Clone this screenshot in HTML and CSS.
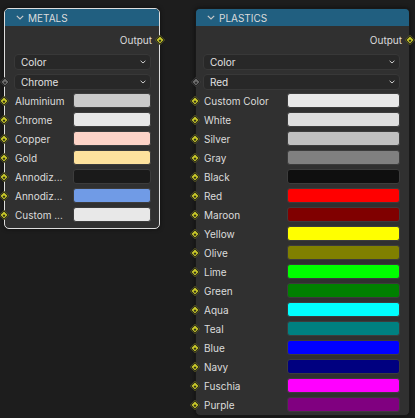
FILE: index.html
```html
<!DOCTYPE html>
<html>
<head>
<meta charset="utf-8">
<link rel="stylesheet" href="styles.css">
</head>
<body>
<div class="canvas">
  <div class="node metals">
    <div class="hdr"><svg class="chev" width="8" height="5" viewBox="0 0 8 5"><path d="M0.8 0.8 L4 4 L7.2 0.8"/></svg><span>METALS</span></div>
    <div class="body">
      <div class="out">Output<i class="sock sock-out"></i></div>
      <div class="dd">Color<svg class="ddchev" width="6" height="4" viewBox="0 0 6 4"><path d="M0.6 0.8 L3 3 L5.4 0.8"/></svg></div>
      <div class="dd">Chrome<svg class="ddchev" width="6" height="4" viewBox="0 0 6 4"><path d="M0.6 0.8 L3 3 L5.4 0.8"/></svg><i class="sock sock-in grey"></i></div>
      <div class="row"><i class="sock sock-in"></i><span class="lbl">Aluminium</span><span class="sw" style="background:#cacaca"></span></div>
      <div class="row"><i class="sock sock-in"></i><span class="lbl">Chrome</span><span class="sw" style="background:#e7e7e7"></span></div>
      <div class="row"><i class="sock sock-in"></i><span class="lbl">Copper</span><span class="sw" style="background:#fdd3c7"></span></div>
      <div class="row"><i class="sock sock-in"></i><span class="lbl">Gold</span><span class="sw" style="background:#fee29d"></span></div>
      <div class="row"><i class="sock sock-in"></i><span class="lbl">Annodiz...</span><span class="sw" style="background:#1a1a1a"></span></div>
      <div class="row"><i class="sock sock-in"></i><span class="lbl">Annodiz...</span><span class="sw" style="background:#709be6"></span></div>
      <div class="row"><i class="sock sock-in"></i><span class="lbl">Custom ...</span><span class="sw" style="background:#e8e8e8"></span></div>
    </div>
  </div>

  <div class="node plastics">
    <div class="hdr"><svg class="chev" width="8" height="5" viewBox="0 0 8 5"><path d="M0.8 0.8 L4 4 L7.2 0.8"/></svg><span>PLASTICS</span></div>
    <div class="body">
      <div class="out">Output<i class="sock sock-out"></i></div>
      <div class="dd">Color<svg class="ddchev" width="6" height="4" viewBox="0 0 6 4"><path d="M0.6 0.8 L3 3 L5.4 0.8"/></svg></div>
      <div class="dd">Red<svg class="ddchev" width="6" height="4" viewBox="0 0 6 4"><path d="M0.6 0.8 L3 3 L5.4 0.8"/></svg><i class="sock sock-in grey"></i></div>
      <div class="row"><i class="sock sock-in"></i><span class="lbl">Custom Color</span><span class="sw" style="background:#e8e8e8"></span></div>
      <div class="row"><i class="sock sock-in"></i><span class="lbl">White</span><span class="sw" style="background:#dedede"></span></div>
      <div class="row"><i class="sock sock-in"></i><span class="lbl">Silver</span><span class="sw" style="background:#c0c0c0"></span></div>
      <div class="row"><i class="sock sock-in"></i><span class="lbl">Gray</span><span class="sw" style="background:#808080"></span></div>
      <div class="row"><i class="sock sock-in"></i><span class="lbl">Black</span><span class="sw" style="background:#0f0f0f"></span></div>
      <div class="row"><i class="sock sock-in"></i><span class="lbl">Red</span><span class="sw" style="background:#ff0000"></span></div>
      <div class="row"><i class="sock sock-in"></i><span class="lbl">Maroon</span><span class="sw" style="background:#800000"></span></div>
      <div class="row"><i class="sock sock-in"></i><span class="lbl">Yellow</span><span class="sw" style="background:#ffff00"></span></div>
      <div class="row"><i class="sock sock-in"></i><span class="lbl">Olive</span><span class="sw" style="background:#808000"></span></div>
      <div class="row"><i class="sock sock-in"></i><span class="lbl">Lime</span><span class="sw" style="background:#00ff00"></span></div>
      <div class="row"><i class="sock sock-in"></i><span class="lbl">Green</span><span class="sw" style="background:#008000"></span></div>
      <div class="row"><i class="sock sock-in"></i><span class="lbl">Aqua</span><span class="sw" style="background:#00ffff"></span></div>
      <div class="row"><i class="sock sock-in"></i><span class="lbl">Teal</span><span class="sw" style="background:#008080"></span></div>
      <div class="row"><i class="sock sock-in"></i><span class="lbl">Blue</span><span class="sw" style="background:#0000ff"></span></div>
      <div class="row"><i class="sock sock-in"></i><span class="lbl">Navy</span><span class="sw" style="background:#000080"></span></div>
      <div class="row"><i class="sock sock-in"></i><span class="lbl">Fuschia</span><span class="sw" style="background:#ff00ff"></span></div>
      <div class="row"><i class="sock sock-in"></i><span class="lbl">Purple</span><span class="sw" style="background:#800080"></span></div>
    </div>
  </div>
</div>
</body>
</html>
```

FILE: styles.css
```css
html, body {
  margin: 0;
  padding: 0;
  background: #1d1d1d;
}
.canvas {
  position: relative;
  width: 415px;
  height: 418px;
  overflow: hidden;
  background: #1d1d1d;
  font-family: Inter, "DejaVu Sans", sans-serif;
  font-size: 10px;
  color: #dcdcdc;
}
.node {
  position: absolute;
  top: 8px;
  box-sizing: border-box;
  background: #303030;
  border: 1px solid #181818;
  border-radius: 5px;
  box-shadow: 0 0 4px rgba(0,0,0,0.55);
}
.metals {
  left: 4px;
  width: 156px;
  height: 221px;
  border-color: #dedede;
}
.plastics {
  left: 195px;
  width: 215px;
  height: 408px;
}
.hdr {
  height: 17px;
  background: #215f80;
  border-radius: 4px 4px 0 0;
  display: flex;
  align-items: center;
  gap: 4px;
  padding-left: 11px;
  color: #dcdcdc;
}
.chev {
  display: block;
  fill: none;
  stroke: #c8c8c8;
  stroke-width: 1.2;
}
.body {
  display: flex;
  flex-direction: column;
  padding-top: 4px;
}
.out {
  position: relative;
  height: 19px;
  display: flex;
  align-items: center;
  justify-content: flex-end;
  padding-right: 7px;
}
.dd {
  position: relative;
  height: 16px;
  box-sizing: border-box;
  background: #282828;
  border: 1px solid #383838;
  border-radius: 4px;
  display: flex;
  align-items: center;
  padding-left: 6px;
  color: #e2e2e2;
}
.out + .dd { margin-top: 5px; }
.dd + .dd { margin-top: 4px; }
.ddchev {
  margin-left: auto;
  margin-right: 4px;
  fill: none;
  stroke: #cfcfcf;
  stroke-width: 1;
}
.metals .dd { margin-left: 9px; margin-right: 8px; }
.plastics .dd { margin-left: 7px; margin-right: 9px; }
.row {
  position: relative;
  height: 19px;
  display: flex;
  align-items: center;
}
.dd + .row { margin-top: 1px; }
.lbl {
  flex: 1;
  white-space: nowrap;
}
.metals .lbl { padding-left: 10px; }
.plastics .lbl { padding-left: 8px; }
.sw {
  height: 15px;
  box-sizing: border-box;
  border: 1px solid #3c3c3c;
  border-radius: 3px;
}
.metals .sw { width: 78px; margin-right: 8px; }
.plastics .sw { width: 113px; margin-right: 9px; }
.sock {
  position: absolute;
  top: 50%;
  width: 5px;
  height: 5px;
  background: #c7c729;
  border: 1px solid #1c1c1c;
  transform: translate(-50%, -50%) rotate(45deg);
}
.sock::after {
  content: "";
  position: absolute;
  left: 1.5px;
  top: 1.5px;
  width: 2px;
  height: 2px;
  background: #2a2a1a;
}
.sock-in { left: -1px; }
.dd .sock-in { left: -10px; }
.plastics .dd .sock-in { left: -8px; }
.sock-out { left: 100%; margin-left: 1px; }
.sock.grey { background: #6e6e6e; }
.sock.grey::after { background: #2a2a2a; }
```
